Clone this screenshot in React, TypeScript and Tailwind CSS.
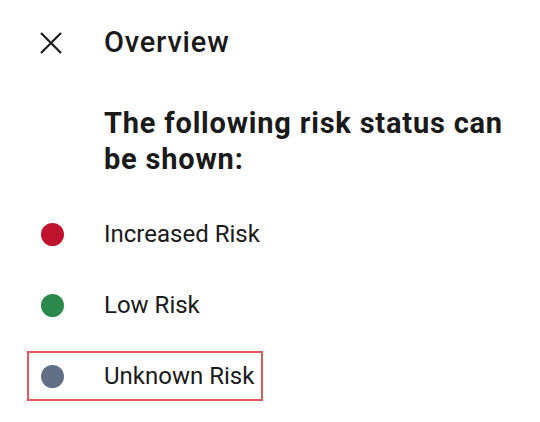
const statuses = [
  { label: 'Increased Risk', color: 'bg-[#c0142e]' },
  { label: 'Low Risk', color: 'bg-[#2b8a4b]' },
  { label: 'Unknown Risk', color: 'bg-[#627087]', marked: true },
];

export default function App() {
  return (
    <div className="w-[540px] h-[422px] bg-white text-[#1a1a1a] font-['Roboto',sans-serif]">
      {/* Header */}
      <div className="flex items-center h-[86px] pl-[40px]">
        <svg width="22" height="22" viewBox="0 0 22 22" className="shrink-0">
          <path d="M1 1L21 21M21 1L1 21" stroke="#1a1a1a" strokeWidth="2.2" />
        </svg>
        <h1 className="ml-[42px] text-[29px] font-medium tracking-[0.8px]">Overview</h1>
      </div>

      <h2 className="pl-[104px] pr-6 mt-[19px] text-[29px] leading-[36px] font-bold tracking-[0.8px]">
        The following risk status can be shown:
      </h2>

      <ul className="mt-[32px] flex flex-col gap-[21px]">
        {statuses.map(s => (
          <li key={s.label} className="pl-[27px]">
            <div className={`flex items-center w-[236px] h-[50px] pl-[12px] ${s.marked ? 'border-2 border-[#e05a5a]' : 'border-2 border-transparent'}`}>
              <span className={`w-[23px] h-[23px] rounded-full ${s.color}`} />
              <span className="ml-[40px] text-[24px]">{s.label}</span>
            </div>
          </li>
        ))}
      </ul>
    </div>
  );
}
